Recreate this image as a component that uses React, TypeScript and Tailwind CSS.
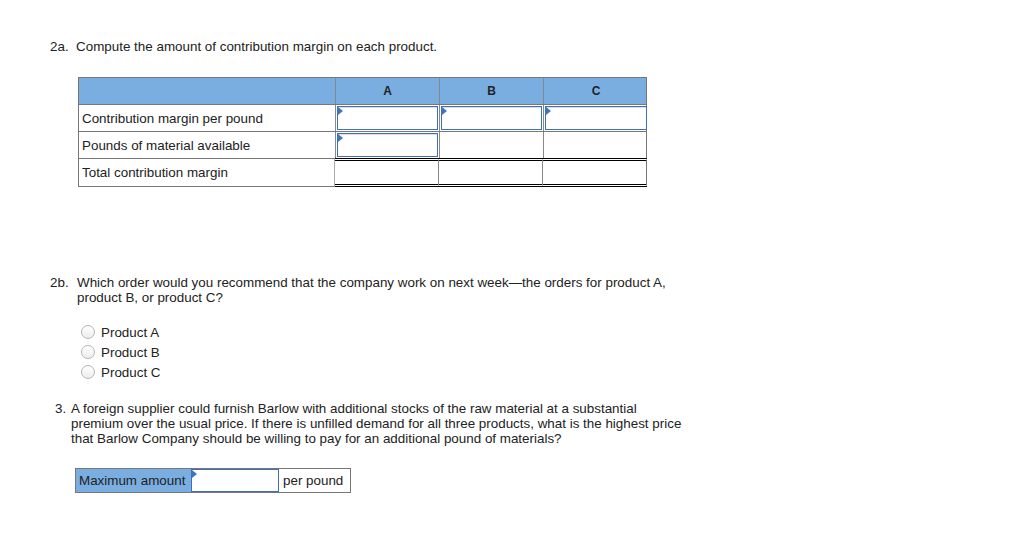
import React from "react"

function Flag() {
  return (
    <span className="absolute left-0 top-0 h-0 w-0 border-y-[4px] border-l-[5px] border-y-transparent border-l-[#3f74c0]" />
  )
}

function InputCell({ last = false }: { last?: boolean }) {
  return (
    <div className={`h-full ${last ? "" : "border-r border-[#888]"} p-px`}>
      <div className="relative h-full border border-[#3f6fb5] bg-white shadow-[inset_0_1px_1px_rgba(0,0,0,0.15)]">
        <Flag />
      </div>
    </div>
  )
}

function Radio({ label }: { label: string }) {
  return (
    <div className="flex h-[20px] items-center">
      <span className="mr-[6px] h-[14px] w-[14px] rounded-full border border-[#b5b5b5] bg-gradient-to-b from-white to-[#ededed]" />
      <span>{label}</span>
    </div>
  )
}

export default function App() {
  const rows = [
    { label: "Contribution margin per pound", inputs: [true, true, true] },
    { label: "Pounds of material available", inputs: [true, false, false] },
  ]

  return (
    <div className="h-[549px] w-[1024px] bg-white pl-[50px] pt-[39px] font-['Liberation_Sans',Arial,sans-serif] text-[13.4px] leading-[15px] text-[#222]">
      <p>2a.&nbsp; Compute the amount of contribution margin on each product.</p>

      {/* table */}
      <div className="ml-[28px] mt-[23px] w-[569px]">
        <div className="grid h-[27px] grid-cols-[257px_104px_104px_104px] border border-b-0 border-[#777] bg-[#7aaee1]">
          <div className="border-r border-[#888]" />
          <div className="flex items-center justify-center border-r border-[#888] text-[12px] font-bold">A</div>
          <div className="flex items-center justify-center border-r border-[#888] text-[12px] font-bold">B</div>
          <div className="flex items-center justify-center text-[12px] font-bold">C</div>
        </div>
        {rows.map((row) => (
          <div
            key={row.label}
            className="grid h-[27px] grid-cols-[257px_104px_104px_104px] border-x border-t border-[#777]"
          >
            <div className="flex items-center border-r border-[#888] pl-[3px]">{row.label}</div>
            {row.inputs.map((isInput, i) =>
              isInput ? (
                <InputCell key={i} last={i === 2} />
              ) : (
                <div key={i} className={i === 2 ? "" : "border-r border-[#888]"} />
              )
            )}
          </div>
        ))}
        <div className="grid h-[29px] grid-cols-[257px_104px_104px_104px]">
          <div className="flex items-center border border-r-[#aaa] border-[#777] pl-[3px]">Total contribution margin</div>
          <div className="border-y-[3px] border-r border-double border-y-black border-r-[#888]" />
          <div className="border-y-[3px] border-r border-double border-y-black border-r-[#888]" />
          <div className="border-y-[3px] border-r border-double border-y-black border-r-[#777]" />
        </div>
      </div>

      {/* 2b */}
      <div className="mt-[88px] flex">
        <span className="w-[27px] shrink-0">2b.</span>
        <p>
          Which order would you recommend that the company work on next week—the orders for product A,
          <br />
          product B, or product C?
        </p>
      </div>
      <div className="ml-[31px] mt-[17px]">
        <Radio label="Product A" />
        <Radio label="Product B" />
        <Radio label="Product C" />
      </div>

      {/* 3 */}
      <div className="ml-[5px] mt-[19px] flex">
        <span className="w-[16px] shrink-0">3.</span>
        <p>
          A foreign supplier could furnish Barlow with additional stocks of the raw material at a substantial
          <br />
          premium over the usual price. If there is unfilled demand for all three products, what is the highest price
          <br />
          that Barlow Company should be willing to pay for an additional pound of materials?
        </p>
      </div>
      <div className="ml-[25px] mt-[22px] flex h-[25px] w-[276px] border border-[#777]">
        <div className="flex w-[115px] items-center bg-[#7aaee1] pl-[3px]">Maximum amount</div>
        <div className="relative w-[88px] border border-[#3f6fb5] bg-white">
          <Flag />
        </div>
        <div className="flex flex-1 items-center pl-[4px]">per pound</div>
      </div>
    </div>
  )
}
